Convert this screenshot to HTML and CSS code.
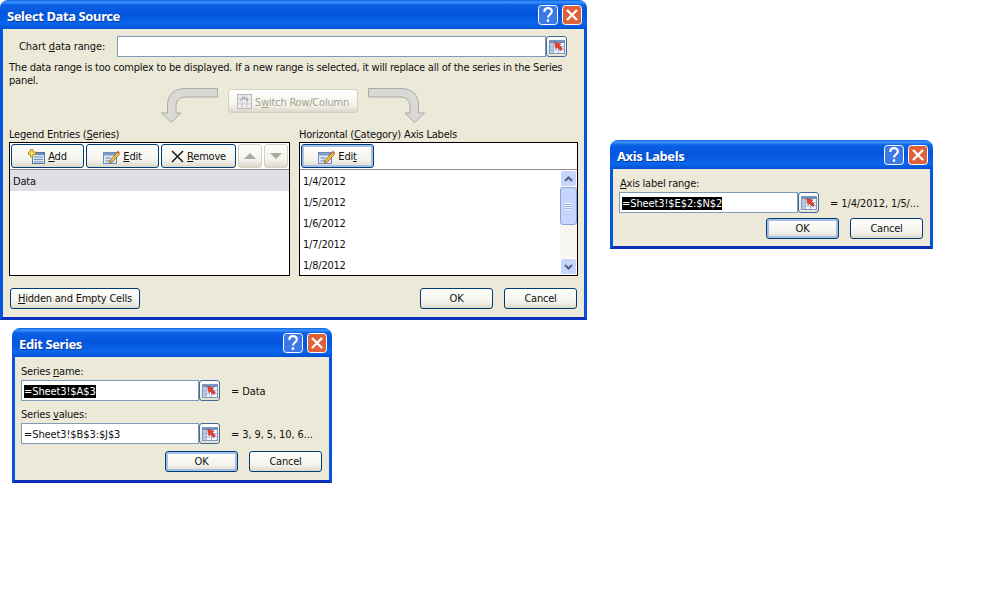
FILE: index.html
```html
<!DOCTYPE html>
<html lang="en">
<head>
<meta charset="utf-8">
<title>Select Data Source</title>
<link rel="stylesheet" href="styles.css">
</head>
<body>
<svg class="defs" width="0" height="0">
  <defs>
    <symbol id="range" viewBox="0 0 16 14">
      <rect x="0.5" y="0.5" width="15" height="13" fill="#f2f5fa" stroke="#7f97b8"/>
      <rect x="1" y="1" width="14" height="2" fill="#6f8fbd"/>
      <rect x="1" y="3" width="3" height="10" fill="#b9cbe4"/>
      <path d="M1 6.500h14M1 10h14M4.500 3v10M9.500 3v10" stroke="#a3b7d2" stroke-width="1" fill="none"/>
      <path d="M5.500 2.500L12 4 10.500 5.500 13.500 8.500 11.500 10.500 8.500 7.500 7 9z" fill="#e8402f" stroke="#b3261c" stroke-width=".5"/>
    </symbol>
    <symbol id="pencil" viewBox="0 0 17 15">
      <rect x="0.5" y="3.500" width="13" height="11" fill="#dfe9f7" stroke="#6f8db8"/>
      <rect x="1" y="4" width="12" height="2.500" fill="#7e9cc8"/>
      <path d="M2.500 9h5M2.500 12h6" stroke="#5f7ba8" fill="none"/>
      <path d="M7.500 11l-1 3 3-1 7-8-2-2z" fill="#f2bf4c" stroke="#8a5c12" stroke-width=".8"/>
      <path d="M13.800 3l2 2 1-1.500-1.800-2z" fill="#d9604a"/>
    </symbol>
    <symbol id="add" viewBox="0 0 17 15">
      <rect x="4.500" y="3.500" width="12" height="11" fill="#dfe9f7" stroke="#53759f"/>
      <rect x="5" y="4" width="11" height="2" fill="#6f8fbe"/>
      <path d="M6 8h9M6 10.500h9M6 12.800h9" stroke="#6c8cb8" fill="none"/>
      <path d="M2.500 .5h2.500v2.500h2.500v2.500h-2.500v2.500h-2.500v-2.500h-2v-2.500h2z" fill="#f8e06a" stroke="#b99224"/>
    </symbol>
    <symbol id="cross" viewBox="0 0 13 13">
      <path d="M1 1l11 11M12 1l-11 11" stroke="#262626" stroke-width="1.700" fill="none"/>
    </symbol>
    <symbol id="grid" viewBox="0 0 16 16">
      <rect x=".5" y=".5" width="15" height="15" fill="#efefef" stroke="#b5b5b5"/>
      <path d="M1 5.500h14M1 10.500h14M5.500 1v14M10.500 1v14" stroke="#c4c4c4" fill="none"/>
      <path d="M3 7l5-4v2h3v3" fill="none" stroke="#9a9a9a"/>
    </symbol>
    <symbol id="help" viewBox="0 0 20 20">
      <rect x=".5" y=".5" width="19" height="19" rx="3" fill="#3c78e6" stroke="#fff"/>
      <path d="M6.300 7c0-5 7.500-5 7.500-.5 0 3-3.800 3-3.800 6" fill="none" stroke="#fff" stroke-width="2.200"/>
      <rect x="8.800" y="14.300" width="2.400" height="2.500" fill="#fff"/>
    </symbol>
    <symbol id="close" viewBox="0 0 20 20">
      <rect x=".5" y=".5" width="19" height="19" rx="3" fill="#e0603a" stroke="#fff"/>
      <path d="M5 5l10 10M15 5L5 15" stroke="#fff" stroke-width="2.400" fill="none"/>
    </symbol>
  </defs>
</svg>

<section class="win win-main">
  <header class="title"><span class="title-text">Select Data Source</span><svg class="cap"><use href="#help"/></svg><svg class="cap"><use href="#close"/></svg></header>
  <div class="body body-main">
    <div class="range-row">
      <span class="range-label">Chart <u>d</u>ata range:</span>
      <span class="input input-wide"></span>
      <span class="refbtn"><svg class="refic"><use href="#range"/></svg></span>
    </div>
    <p class="note">The data range is too complex to be displayed. If a new range is selected, it will replace all of the series in the Series panel.</p>
    <div class="switch-row">
      <svg class="arrow" viewBox="0 0 57 36"><path d="M56.500 .5H24C13 .5 6.500 7 6.500 17V25H.5L10.500 34.500 20 25H15V19C15 13 18 9 25 9H56.500Z" fill="#d9d9d6" stroke="#a9a9a6"/></svg>
      <span class="btn btn-switch"><svg class="ic-grid"><use href="#grid"/></svg><span class="switch-text">S<u>w</u>itch Row/Column</span></span>
      <svg class="arrow" viewBox="0 0 57 36"><path d="M.5 .5H33C44 .5 50.500 7 50.500 17V25H56.500L46.500 34.500 37 25H42V19C42 13 39 9 32 9H.5Z" fill="#d9d9d6" stroke="#a9a9a6"/></svg>
    </div>
    <div class="columns">
      <div class="col col-left">
        <div class="col-label">Legend Entries (<u>S</u>eries)</div>
        <div class="panel">
          <div class="toolbar">
            <span class="btn btn-tool"><svg class="ic-pen"><use href="#add"/></svg><span><u>A</u>dd</span></span>
            <span class="btn btn-tool"><svg class="ic-pen"><use href="#pencil"/></svg><span><u>E</u>dit</span></span>
            <span class="btn btn-tool btn-remove"><svg class="ic-x"><use href="#cross"/></svg><span><u>R</u>emove</span></span>
            <span class="btn btn-move"><span class="tri tri-up"></span></span>
            <span class="btn btn-move"><span class="tri tri-down"></span></span>
          </div>
          <div class="list"><div class="row row-sel">Data</div></div>
        </div>
      </div>
      <div class="col col-right">
        <div class="col-label">Horizontal (<u>C</u>ategory) Axis Labels</div>
        <div class="panel">
          <div class="toolbar">
            <span class="btn btn-tool btn-default"><svg class="ic-pen"><use href="#pencil"/></svg><span>Edi<u>t</u></span></span>
          </div>
          <div class="list list-scroll">
            <div class="rows">
              <div class="row">1/4/2012</div>
              <div class="row">1/5/2012</div>
              <div class="row">1/6/2012</div>
              <div class="row">1/7/2012</div>
              <div class="row">1/8/2012</div>
            </div>
            <div class="scrollbar">
              <span class="sb-btn"><svg viewBox="0 0 9 6" class="chev"><path d="M1 5l3.500-3.500L8 5" fill="none" stroke="#4d6185" stroke-width="2"/></svg></span>
              <span class="sb-thumb"><span class="grip"></span></span>
              <span class="sb-track"></span>
              <span class="sb-btn"><svg viewBox="0 0 9 6" class="chev"><path d="M1 1l3.500 3.500L8 1" fill="none" stroke="#4d6185" stroke-width="2"/></svg></span>
            </div>
          </div>
        </div>
      </div>
    </div>
    <div class="footer">
      <span class="btn btn-hidden"><span><u>H</u>idden and Empty Cells</span></span>
      <span class="spacer"></span>
      <span class="btn btn-dlg">OK</span>
      <span class="btn btn-dlg">Cancel</span>
    </div>
  </div>
</section>

<section class="win win-axis">
  <header class="title"><span class="title-text">Axis Labels</span><svg class="cap"><use href="#help"/></svg><svg class="cap"><use href="#close"/></svg></header>
  <div class="body body-small">
    <div class="field-label field-label-indent"><u>A</u>xis label range:</div>
    <div class="field-row">
      <span class="input input-axis"><span class="sel">=Sheet3!$E$2:$N$2</span></span>
      <span class="refbtn"><svg class="refic"><use href="#range"/></svg></span>
      <span class="preview">= 1/4/2012, 1/5/...</span>
    </div>
    <div class="dlg-buttons">
      <span class="btn btn-dlg btn-default">OK</span>
      <span class="btn btn-dlg">Cancel</span>
    </div>
  </div>
</section>

<section class="win win-series">
  <header class="title"><span class="title-text">Edit Series</span><svg class="cap"><use href="#help"/></svg><svg class="cap"><use href="#close"/></svg></header>
  <div class="body body-small">
    <div class="field-label">Series <u>n</u>ame:</div>
    <div class="field-row">
      <span class="input input-series"><span class="sel">=Sheet3!$A$3</span></span>
      <span class="refbtn"><svg class="refic"><use href="#range"/></svg></span>
      <span class="preview">= Data</span>
    </div>
    <div class="field-label field-label-next">Series <u>v</u>alues:</div>
    <div class="field-row">
      <span class="input input-series">=Sheet3!$B$3:$J$3</span>
      <span class="refbtn"><svg class="refic"><use href="#range"/></svg></span>
      <span class="preview">= 3, 9, 5, 10, 6...</span>
    </div>
    <div class="dlg-buttons dlg-buttons-series">
      <span class="btn btn-dlg btn-default">OK</span>
      <span class="btn btn-dlg">Cancel</span>
    </div>
  </div>
</section>
</body>
</html>
```

FILE: styles.css
```css
* { box-sizing: border-box; }
html, body { margin: 0; padding: 0; background: #fff; }
body {
  position: relative;
  width: 1000px;
  height: 600px;
  overflow: hidden;
  font: 11px/13px "DejaVu Sans Condensed", "DejaVu Sans", sans-serif;
  letter-spacing: -0.22px;
  color: #111;
}
.defs { position: absolute; }
.win {
  position: absolute;
  display: flex;
  flex-direction: column;
  background: #ece9d8;
  border-radius: 8px 8px 0 0;
  overflow: hidden;
}
.win-main { left: 0; top: 0; width: 587px; height: 320px; }
.win-axis { left: 610px; top: 140px; width: 323px; height: 109px; }
.win-series { left: 12px; top: 328px; width: 320px; height: 155px; }
.title {
  flex: none;
  height: 29px;
  display: flex;
  align-items: center;
  gap: 4px;
  padding: 1px 5px 0 7px;
  background: linear-gradient(180deg, #0a5fe0 0, #3d95ff 2px, #0a62e6 5px, #0455dc 14px, #0a66ee 24px, #0350d0 29px);
}
.title-text {
  flex: 1;
  padding-top: 2px;
  color: #fff;
  font: 700 13px/15px "Noto Sans", "DejaVu Sans", sans-serif;
  letter-spacing: -0.4px;
  text-shadow: 1px 1px 0 #0a3aa0;
}
.cap { width: 20px; height: 20px; flex: none; }
.body {
  flex: 1;
  border: solid #0855dd;
  border-width: 0 3px 3px;
  border-bottom-color: #0a2fb8;
  display: flex;
  flex-direction: column;
}
.body-main { padding: 7px 6px 0; }
.range-row { display: flex; align-items: center; height: 21px; }
.range-label { width: 108px; padding-left: 10px; flex: none; letter-spacing: -0.1px; }
.input {
  display: flex;
  align-items: center;
  background: #fff;
  border: 1px solid #7f9db9;
  height: 21px;
  padding: 2px 0 0 2px;
  white-space: nowrap;
  letter-spacing: -0.1px;
}
.input-wide { width: 429px; }
.refbtn {
  width: 21px;
  height: 21px;
  flex: none;
  display: flex;
  align-items: center;
  justify-content: center;
  border: 1px solid #3e6a94;
  border-radius: 3px;
  background: linear-gradient(#fff, #e6e3d6);
}
.refic { width: 16px; height: 14px; }
.note { margin: 4px 0 0; height: 26px; }
.switch-row {
  display: flex;
  align-items: flex-start;
  height: 36px;
  margin-top: 1px;
  padding-left: 152px;
}
.arrow { width: 57px; height: 36px; flex: none; }
.switch-row .btn-switch { margin: 1px 10px 0; }
.btn {
  display: inline-flex;
  align-items: center;
  justify-content: center;
  flex: none;
  height: 24px;
  border: 1px solid #003c74;
  border-radius: 3px;
  background: linear-gradient(#fff, #f3f2ea 70%, #dcd8c8);
  white-space: nowrap;
}
.btn-switch {
  width: 130px;
  height: 24px;
  color: #a3a18f;
  border-color: #d4d1c2;
  gap: 3px;
}
.switch-text { padding-top: 2px; }
.ic-grid { width: 15px; height: 15px; }
.columns { display: flex; gap: 9px; margin-top: 3px; }
.col-left { width: 281px; }
.col-right { width: 279px; }
.col-label { height: 15px; padding-top: 1px; }
.panel {
  height: 134px;
  background: #fff;
  border: 1px solid #000;
  display: flex;
  flex-direction: column;
}
.toolbar {
  flex: none;
  height: 27px;
  display: flex;
  gap: 2px;
  padding: 1px 1px 0;
  border-bottom: 1px solid #8c8c8c;
  background: #fff;
}
.btn-tool { width: 73px; gap: 3px; }
.btn-remove { width: 75px; }
.btn-move { width: 24px; border-color: #d4d1c2; }
.tri { width: 0; height: 0; border: 6px solid transparent; }
.tri-up { border-bottom-color: #a9a99f; border-top-width: 0; }
.tri-down { border-top-color: #a9a99f; border-bottom-width: 0; }
.ic-pen { width: 17px; height: 15px; }
.ic-x { width: 13px; height: 13px; }
.btn-default { box-shadow: inset 0 0 0 2px #a4bfe8; }
.list { flex: 1; min-height: 0; overflow: hidden; }
.list-scroll { display: flex; }
.rows { flex: 1; }
.row { height: 21px; line-height: 23px; padding-left: 3px; }
.row-sel { background: #dfdfe5; }
.scrollbar {
  width: 17px;
  flex: none;
  display: flex;
  flex-direction: column;
  background: #f7f6f0;
}
.sb-btn {
  flex: none;
  height: 17px;
  display: flex;
  align-items: center;
  justify-content: center;
  background: #c5d5fb;
  border: 1px solid #fff;
  border-radius: 3px;
}
.chev { width: 9px; height: 6px; }
.sb-thumb {
  flex: none;
  height: 38px;
  display: flex;
  align-items: center;
  justify-content: center;
  background: #c5d5fb;
  border: 1px solid #8aa4d8;
  border-radius: 3px;
}
.grip {
  width: 7px;
  height: 7px;
  background: repeating-linear-gradient(#eef3ff 0 1px, #9fb6e6 1px 2px);
}
.sb-track { flex: 1; }
.footer { display: flex; margin-top: 12px; padding: 0 1px; gap: 11px; }
.spacer { flex: 1; }
.btn-hidden { width: 130px; height: 21px; }
.btn-dlg { width: 73px; height: 21px; }
.body-small { padding: 0 6px; }
.field-label { margin-top: 8px; }
.field-label-indent { padding-left: 1px; }
.field-row { display: flex; align-items: center; margin-top: 2px; }
.field-label-next { margin-top: 7px; }
.input-axis { width: 179px; }
.input-series { width: 178px; }
.sel { background: #000; color: #fff; }
.preview { margin-left: 11px; padding-top: 2px; white-space: nowrap; letter-spacing: -0.1px; }
.dlg-buttons { display: flex; justify-content: flex-end; gap: 11px; margin-top: 5px; padding-right: 1px; }
.dlg-buttons-series { margin-top: 7px; }
```
